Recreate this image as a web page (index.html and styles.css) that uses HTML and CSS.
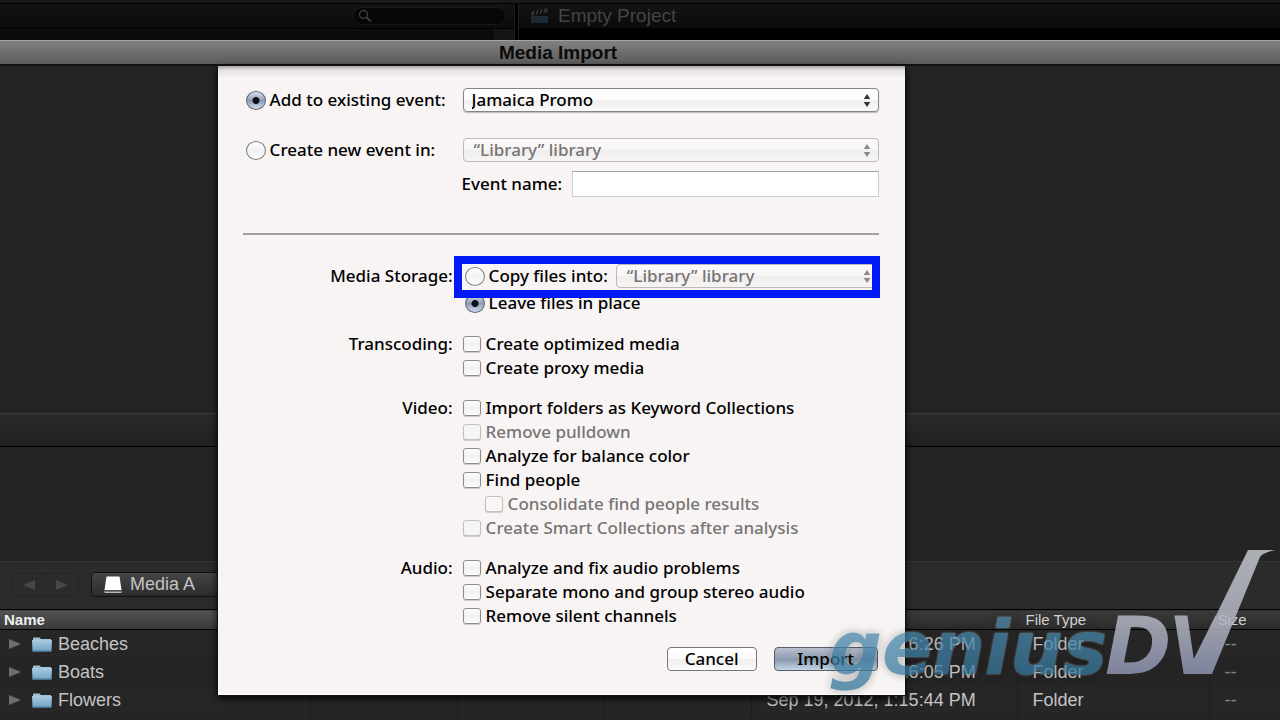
FILE: index.html
```html
<!DOCTYPE html>
<html lang="en">
<head>
    <meta charset="utf-8">
    <title>Media Import</title>
    <link rel="stylesheet" href="styles.css">
</head>
<body>
    <!-- Shared shapes -->
    <svg class="defs" aria-hidden="true">
        <symbol id="arrows" viewBox="0 0 8 14">
            <path d="M4 0L7.500 5.500H0.500Z M4 14L7.500 8.500H0.500Z" fill="currentColor"/>
        </symbol>
        <symbol id="triangle" viewBox="0 0 12 12">
            <path d="M0 1L12 6L0 11Z" fill="currentColor"/>
        </symbol>
        <linearGradient id="folderFill" x1="0" y1="0" x2="0" y2="1">
            <stop offset="0" stop-color="#a9cbe2"/>
            <stop offset="1" stop-color="#6fa3c4"/>
        </linearGradient>
        <symbol id="folder" viewBox="0 0 20 15">
            <path d="M1 3V1.500Q1 0.500 2 0.500H7.500L9 2H19V5H1Z" fill="#9fc0d6"/>
            <path d="M0 3H20L19.500 14.500H0.500Z" fill="url(#folderFill)"/>
            <path d="M0.500 14H19.500" stroke="#4c7d9d"/>
        </symbol>
    </svg>

    <div class="app">
        <div class="top-bar">
            <div class="browser-panel">
                <div class="panel-tools">
                    <svg class="search-icon" viewBox="0 0 14 14"><circle cx="5.500" cy="5.500" r="4" fill="none" stroke="currentColor" stroke-width="1.500"/><path d="M8.500 8.500L13 12.500" stroke="currentColor" stroke-width="2"/></svg>
                    <input type="search" class="search" aria-label="Search">
                </div>
                <div class="panel-foot"><span class="foot-tab"></span></div>
            </div>
            <div class="project-panel">
                <div class="panel-tools">
                    <svg class="clapper" viewBox="0 0 20 16"><path d="M1 4L17 0L18 4L2 8Z" fill="#303334"/><path d="M4 8L6 3M8 7L10 2M12 6L14 1" stroke="#090909" stroke-width="1.500"/><path d="M1 8H18V15H1Z" fill="#1d2935"/></svg>
                    <span>Empty Project</span>
                </div>
            </div>
        </div>

        <div class="title-bar">Media Import</div>

        <div class="window-body">
            <div class="viewer"></div>
            <div class="strip"></div>
            <div class="filmstrip"></div>

            <div class="path-bar">
                <div class="nav">
                    <button type="button" aria-label="Back"><svg class="back" viewBox="0 0 12 12"><use href="#triangle"/></svg></button>
                    <button type="button" aria-label="Forward"><svg viewBox="0 0 12 12"><use href="#triangle"/></svg></button>
                </div>
                <button type="button" class="volume">
                    <svg class="disk" viewBox="0 0 18 18"><path d="M2.500 0.500H15.500L17.500 14H0.500Z" fill="#fff"/><path d="M0.500 14.500H17.500V17H0.500Z" fill="#b8b8b8"/><path d="M1 15H17" stroke="#333"/></svg>
                    Media A
                </button>
            </div>

            <table class="files">
                <colgroup>
                    <col class="col-name"><col class="col-small"><col class="col-small"><col class="col-small"><col class="col-date"><col class="col-type"><col>
                </colgroup>
                <thead>
                    <tr><th>Name</th><th></th><th></th><th></th><th></th><th>File Type</th><th>Size</th></tr>
                </thead>
                <tbody>
                    <tr>
                        <td><div class="file"><svg class="twist"><use href="#triangle"/></svg><svg class="folder"><use href="#folder"/></svg>Beaches</div></td>
                        <td></td><td></td><td></td><td>Sep 19, 2012, 1:16:26 PM</td><td>Folder</td><td>--</td>
                    </tr>
                    <tr>
                        <td><div class="file"><svg class="twist"><use href="#triangle"/></svg><svg class="folder"><use href="#folder"/></svg>Boats</div></td>
                        <td></td><td></td><td></td><td>Sep 19, 2012, 1:16:05 PM</td><td>Folder</td><td>--</td>
                    </tr>
                    <tr>
                        <td><div class="file"><svg class="twist"><use href="#triangle"/></svg><svg class="folder"><use href="#folder"/></svg>Flowers</div></td>
                        <td></td><td></td><td></td><td>Sep 19, 2012, 1:15:44 PM</td><td>Folder</td><td>--</td>
                    </tr>
                    <tr><td></td><td></td><td></td><td></td><td></td><td></td><td></td></tr>
                </tbody>
            </table>

            <!-- Import sheet -->
            <form class="sheet">
                <div class="row event-row">
                    <label class="choice"><input type="radio" name="event" checked>Add to existing event:</label>
                    <span class="popup">
                        <select aria-label="Existing event"><option>Jamaica Promo</option></select>
                        <svg><use href="#arrows"/></svg>
                    </span>
                </div>
                <div class="row event-row">
                    <label class="choice"><input type="radio" name="event">Create new event in:</label>
                    <span class="popup">
                        <select aria-label="Library for new event" disabled><option>“Library” library</option></select>
                        <svg><use href="#arrows"/></svg>
                    </span>
                </div>
                <div class="row name-row">
                    <label for="eventName">Event name:</label>
                    <input type="text" id="eventName">
                </div>

                <hr>

                <div class="row section storage">
                    <span class="heading">Media Storage:</span>
                    <div class="options">
                        <div class="copy-row">
                            <label class="choice"><input type="radio" name="storage">Copy files into:</label>
                            <span class="popup">
                                <select aria-label="Copy destination" disabled><option>“Library” library</option></select>
                                <svg><use href="#arrows"/></svg>
                            </span>
                            <span class="highlight"></span>
                        </div>
                        <label class="choice"><input type="radio" name="storage" checked>Leave files in place</label>
                    </div>
                </div>
                <div class="row section">
                    <span class="heading">Transcoding:</span>
                    <div class="options">
                        <label class="choice"><input type="checkbox">Create optimized media</label>
                        <label class="choice"><input type="checkbox">Create proxy media</label>
                    </div>
                </div>
                <div class="row section">
                    <span class="heading">Video:</span>
                    <div class="options">
                        <label class="choice"><input type="checkbox">Import folders as Keyword Collections</label>
                        <label class="choice off"><input type="checkbox" disabled>Remove pulldown</label>
                        <label class="choice"><input type="checkbox">Analyze for balance color</label>
                        <label class="choice"><input type="checkbox">Find people</label>
                        <label class="choice off nested"><input type="checkbox" disabled>Consolidate find people results</label>
                        <label class="choice off"><input type="checkbox" disabled>Create Smart Collections after analysis</label>
                    </div>
                </div>
                <div class="row section">
                    <span class="heading">Audio:</span>
                    <div class="options">
                        <label class="choice"><input type="checkbox">Analyze and fix audio problems</label>
                        <label class="choice"><input type="checkbox">Separate mono and group stereo audio</label>
                        <label class="choice"><input type="checkbox">Remove silent channels</label>
                    </div>
                </div>

                <div class="buttons">
                    <button type="button" class="cancel">Cancel</button>
                    <button type="button" class="import">Import</button>
                </div>
            </form>
        </div>

        <!-- Watermark -->
        <svg class="logo" viewBox="0 0 460 180" role="img" aria-label="geniusDV">
            <defs>
                <linearGradient id="blue" x1="0" y1="0" x2="0" y2="1">
                    <stop offset="0" stop-color="#5290b3"/>
                    <stop offset="1" stop-color="#2f7197"/>
                </linearGradient>
                <linearGradient id="silver" gradientUnits="userSpaceOnUse" x1="0" y1="10" x2="0" y2="134">
                    <stop offset="0" stop-color="#c4c8ce"/>
                    <stop offset="0.600" stop-color="#b1b5c2"/>
                    <stop offset="1" stop-color="#8f94b2"/>
                </linearGradient>
            </defs>
            <g class="logo-genius"><text x="9" y="134" fill="url(#blue)">genius</text></g>
            <g class="logo-dv" fill="url(#silver)">
                <text x="285" y="134">D</text>
                <text x="349" y="134" class="narrow">V</text>
                <path d="M373 134H392L440 17Q442 13 455 10H428L380 108Z"/>
            </g>
        </svg>
    </div>
</body>
</html>
```

FILE: styles.css
```css
* {
    box-sizing: border-box;
}

body {
    margin: 0;
    background: #242424;
    font-family: "Liberation Sans", Arial, sans-serif;
    font-size: 18px;
    color: #c4c4c4;
}

input, select, button {
    font: inherit;
    color: inherit;
    margin: 0;
}

.defs {
    position: absolute;
    width: 0;
    height: 0;
}

.app {
    position: relative;
    display: flex;
    flex-direction: column;
    height: 100vh;
    overflow: hidden;
}

/* Dimmed main window */
.top-bar {
    display: flex;
    height: 40px;
    flex: none;
    border-top: 3px solid #1a1a1a;
    background: #000;
    color: #444;
    font-size: 19px;
}

.browser-panel {
    width: 515px;
    border-right: 1px solid #1c1c1c;
}

.project-panel {
    flex: 1;
    margin-left: 3px;
    border-left: 1px solid #1c1c1c;
}

.panel-tools {
    position: relative;
    display: flex;
    align-items: center;
    height: 24px;
    margin-top: 1px;
    background: linear-gradient(#131313, #0b0b0b);
}

.browser-panel .panel-tools {
    justify-content: flex-end;
    padding-right: 8px;
}

.project-panel .panel-tools {
    gap: 8px;
    padding-left: 11px;
}

.search {
    width: 153px;
    height: 18px;
    border: 1px solid #191919;
    border-radius: 9px;
    background: #060606;
    padding-left: 24px;
    appearance: none;
}

.search-icon {
    position: absolute;
    right: 142px;
    width: 14px;
    height: 14px;
    color: #3c3c3c;
}

.clapper {
    width: 20px;
    height: 16px;
}

.panel-foot {
    display: flex;
    justify-content: flex-end;
    height: 11px;
    margin-top: 1px;
    background: #0c0c0c;
}

.foot-tab {
    width: 20px;
    background: #151515;
}

.title-bar {
    flex: none;
    height: 26px;
    padding-right: 164px;
    border-top: 1px solid #a3a3a3;
    border-bottom: 2px solid #111;
    background: linear-gradient(#808080, #5c5c5c);
    color: #0a0a0a;
    font-size: 19px;
    font-weight: bold;
    line-height: 24px;
    text-align: center;
}

/* Import window */
.window-body {
    position: relative;
    display: flex;
    flex-direction: column;
    flex: 1;
    min-height: 0;
    background: #242424;
}

.viewer {
    flex: 1;
}

.strip {
    height: 34px;
    flex: none;
    border-top: 1px solid #3c3c3c;
    border-bottom: 1px solid #000;
    background: linear-gradient(#2b2b2b, #202020);
}

.filmstrip {
    height: 114px;
    flex: none;
}

.path-bar {
    display: flex;
    align-items: center;
    gap: 12px;
    flex: none;
    height: 48px;
    padding: 0 12px 2px;
    border-top: 1px solid #353535;
    background: #2b2b2b;
}

.nav {
    display: flex;
    width: 67px;
    height: 24px;
    border: 1px solid #242424;
    border-radius: 4px;
}

.nav button {
    flex: 1;
    padding: 0;
    border: 0;
    background: none;
    color: #484848;
    line-height: 0;
}

.nav button + button {
    border-left: 1px solid #262626;
}

.nav svg {
    width: 12px;
    height: 14px;
}

.nav .back {
    transform: scaleX(-1);
}

.volume {
    display: flex;
    align-items: center;
    gap: 8px;
    width: 180px;
    height: 25px;
    padding: 0 12px;
    border: 1px solid #101010;
    border-radius: 4px;
    background: linear-gradient(#454545, #2c2c2c);
    color: #c4c4c4;
}

.disk {
    width: 18px;
    height: 18px;
}

.files {
    flex: none;
    width: 100%;
    height: 111px;
    display: block;
    overflow: hidden;
    table-layout: fixed;
    border-collapse: collapse;
}

.col-name {
    width: 310px;
}

.col-small {
    width: 147px;
}

.col-date {
    width: 266px;
}

.col-type {
    width: 192px;
}

.files th {
    height: 20px;
    padding: 0 0 0 8px;
    border-top: 1px solid #000;
    border-bottom: 1px solid #000;
    border-left: 1px solid #303030;
    background: linear-gradient(#3a3a3a, #2b2b2b);
    color: #d0d0d0;
    font-size: 15px;
    font-weight: normal;
    line-height: 18px;
    text-align: left;
}

.files th:first-child {
    padding-left: 4px;
    border-left: 0;
    background: linear-gradient(#535353, #393939);
    color: #f0f0f0;
    font-weight: bold;
}

.files th:last-child,
.files td:last-child {
    min-width: 71px;
}

.files td {
    height: 28px;
    padding: 0 0 0 15px;
    border-left: 1px solid #1e1e1e;
    line-height: 28px;
    white-space: nowrap;
}

.files td:first-child {
    padding-left: 9px;
    border-left: 0;
}

.files tr:nth-child(odd) td {
    background: #262627;
}

.files td:last-child {
    color: #858585;
}

.file {
    display: flex;
    align-items: center;
}

.twist {
    width: 12px;
    height: 12px;
    margin-right: 11px;
    color: #6e6e6e;
}

.folder {
    width: 20px;
    height: 15px;
    margin-right: 6px;
}

/* Sheet */
.sheet {
    position: absolute;
    top: 0;
    left: 17%;
    width: 687px;
    padding: 22px 26px 23px 25px;
    border-bottom: 1px solid #fff;
    background: linear-gradient(#aaa6a6, #e4e0e0 4px, #f8f4f4 12px);
    box-shadow: 0 0 0 1px #111, 0 3px 8px #000;
    color: #000;
    font-family: "Noto Sans", "Open Sans", sans-serif;
    font-size: 17px;
    font-weight: 500;
    line-height: 24px;
}

.row {
    display: grid;
    grid-template-columns: 210px 1fr;
    column-gap: 10px;
}

.event-row {
    margin-bottom: 26px;
}

.event-row .choice {
    padding-left: 3px;
}

.choice {
    display: flex;
    align-items: center;
    gap: 5px;
    white-space: nowrap;
}

.choice input {
    flex: none;
    appearance: none;
    border: 1px solid #8b8b8b;
    background: linear-gradient(#fff, #f1f1f1 50%, #fff);
}

.choice input[type="radio"] {
    width: 20px;
    height: 19px;
    margin-right: -1px;
    border-radius: 50%;
    border-color: #7d7d7d;
}

.choice input[type="radio"]:checked {
    border-color: #5d6676;
    background: radial-gradient(circle, #0b0e16 3px, transparent 4px), linear-gradient(#dce1ec, #8d9bb3 50%, #d2dcec);
}

.choice input[type="checkbox"] {
    width: 18px;
    height: 16px;
    border-radius: 3px;
    box-shadow: 0 1px 1px #ccc;
}

.choice input:disabled {
    border-color: #c2bfbf;
    background: #f8f5f5;
}

.off {
    color: #777474;
}

.nested {
    padding-left: 22px;
}

.popup {
    position: relative;
    flex: 1;
    height: 24px;
}

.popup select {
    display: block;
    width: 100%;
    height: 24px;
    padding: 0 8px;
    appearance: none;
    border: 1px solid #858585;
    border-radius: 4px;
    background: linear-gradient(#fff, #fbfbfb 50%, #f0eeee 50%, #fafafa);
    box-shadow: 0 1px 1px #bbb;
    color: #000;
    line-height: 22px;
}

.popup select:disabled {
    padding-left: 10px;
    border-color: #bcb9b9;
    background: linear-gradient(#fbf9f9, #f8f5f5 50%, #f0eded 50%, #f7f4f4);
    box-shadow: none;
    color: #777474;
    opacity: 1;
}

.popup svg {
    position: absolute;
    top: 6px;
    right: 8px;
    width: 8px;
    height: 13px;
    color: #333;
    pointer-events: none;
}

.popup select:disabled + svg {
    color: #8b8888;
}

.name-row {
    grid-template-columns: 100px 1fr;
    margin-top: -17px;
    padding-left: 219px;
    align-items: center;
    white-space: nowrap;
}

.name-row input {
    width: 100%;
    height: 26px;
    padding: 0 6px;
    border: 1px solid #cfcccc;
    border-top-color: #a5a2a2;
    background: #fff;
}

hr {
    height: 2px;
    margin: 36px 0 28px;
    border: 0;
    background: #a29f9f;
}

.section {
    margin-bottom: 16px;
}

.heading {
    text-align: right;
}

.storage {
    line-height: 26px;
}

.storage .options {
    padding-left: 2px;
}

.copy-row {
    position: relative;
    display: flex;
    align-items: center;
    gap: 8px;
    margin-bottom: 1px;
}

.highlight {
    position: absolute;
    inset: -7px -1px -9px -11px;
    border: 8px solid #0019f5;
}

.buttons {
    display: flex;
    justify-content: flex-end;
    gap: 17px;
    margin-top: 19px;
    padding-right: 1px;
}

.buttons button {
    height: 24px;
    padding: 0;
    border: 1px solid #777;
    border-radius: 4px;
    background: linear-gradient(#fff, #fafafa 50%, #efeded 50%, #fdfdfd);
    line-height: 22px;
}

.buttons .cancel {
    width: 90px;
}

.buttons .import {
    width: 104px;
    border-color: #555c6b;
    background: linear-gradient(#b9bfcd, #8f9bb0 50%, #8796ab 50%, #c3d6e4);
}

/* Watermark */
.logo {
    position: absolute;
    right: 0;
    bottom: 0;
    width: 460px;
    height: 180px;
    pointer-events: none;
}

.logo text {
    font-family: "DejaVu Sans", sans-serif;
    font-style: oblique;
    font-weight: bold;
}

.logo-genius {
    opacity: 0.75;
    filter: drop-shadow(0 0 1px rgba(255, 255, 255, 0.6)) drop-shadow(0 0 4px rgba(0, 0, 0, 0.4));
}

.logo-genius text {
    font-size: 74px;
}

.logo-dv {
    opacity: 0.85;
}

.logo-dv text {
    font-size: 80px;
}

.logo-dv .narrow {
    font-family: "DejaVu Sans Condensed", "DejaVu Sans", sans-serif;
}
```
